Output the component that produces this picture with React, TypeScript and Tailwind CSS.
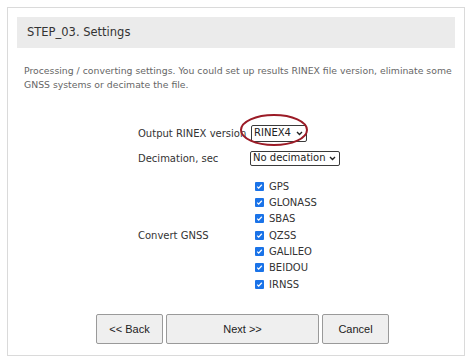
import React from 'react';

const FONT = { fontFamily: '"DejaVu Sans", Verdana, sans-serif' };

const systems = ['GPS', 'GLONASS', 'SBAS', 'QZSS', 'GALILEO', 'BEIDOU', 'IRNSS'];

const FakeSelect: React.FC<{ label: string; className?: string }> = ({ label, className }) => (
  <span
    className={`inline-flex items-center justify-between whitespace-nowrap border border-[#3a3a3a] rounded-[2px] bg-white pl-[2px] pr-[3px] text-[10px] text-[#222] ${className ?? ''}`}
  >
    <span className="leading-none">{label}</span>
    <svg width="7" height="5" viewBox="0 0 7 5" className="ml-[3px] shrink-0">
      <path d="M1 1l2.5 2.5L6 1" fill="none" stroke="#222" strokeWidth="1.4" />
    </svg>
  </span>
);

const Check: React.FC = () => (
  <span className="w-[9px] h-[9px] rounded-[1px] bg-[#1a73e8] flex items-center justify-center">
    <svg width="7" height="7" viewBox="0 0 7 7">
      <path d="M1.2 3.6l1.5 1.5L5.8 1.8" fill="none" stroke="white" strokeWidth="1.3" />
    </svg>
  </span>
);

export default function App() {
  return (
    <div className="w-[474px] h-[361px] bg-white p-[7px]" style={FONT}>
      <div className="w-[458px] h-[349px] border border-[#dadada] p-[9px] flex flex-col">
        <div className="h-[31px] bg-[#ebebeb] px-[10px] flex items-center text-[11.5px] text-[#333]">
          STEP_03. Settings
        </div>

        <p className="mt-[16px] pl-[7px] text-[9.3px] leading-[14px] text-[#666] whitespace-nowrap">
          Processing / converting settings. You could set up results RINEX file version, eliminate some
          <br />
          GNSS systems or decimate the file.
        </p>

        <div className="mt-[31px] pl-[121px] text-[10px] text-[#333]">
          <div className="flex items-center h-[20px]">
            <span className="w-[113px]">Output RINEX version</span>
            <span className="relative">
              <FakeSelect label="RINEX4" className="w-[56px] h-[17px]" />
              <svg
                width="70"
                height="34"
                viewBox="0 0 70 34"
                className="absolute left-[-12px] top-[-12px] pointer-events-none"
              >
                <ellipse cx="35" cy="17" rx="33" ry="15" fill="none" stroke="#9b1b26" strokeWidth="2" />
              </svg>
            </span>
          </div>

          <div className="flex items-center h-[20px] mt-[5px]">
            <span className="w-[112px]">Decimation, sec</span>
            <FakeSelect label="No decimation" className="h-[15px]" />
          </div>

          <div className="flex items-center mt-[10px]">
            <span className="w-[117px]">Convert GNSS</span>
            <div className="flex flex-col">
              {systems.map((s) => (
                <label key={s} className="h-[16.33px] flex items-center gap-[5px]">
                  <Check />
                  <span>{s}</span>
                </label>
              ))}
            </div>
          </div>
        </div>

        <div
          className="mt-[22px] pl-[79px] flex gap-[3px] text-[11px] text-[#222]"
          style={{ fontFamily: '"Liberation Sans", Arial, sans-serif' }}
        >
          <button className="w-[67px] h-[30px] bg-[#efefef] border border-[#9a9a9a] rounded-[2px]">&lt;&lt; Back</button>
          <button className="w-[153px] h-[30px] bg-[#efefef] border border-[#9a9a9a] rounded-[2px]">Next &gt;&gt;</button>
          <button className="w-[67px] h-[30px] bg-[#efefef] border border-[#9a9a9a] rounded-[2px]">Cancel</button>
        </div>
      </div>
    </div>
  );
}
